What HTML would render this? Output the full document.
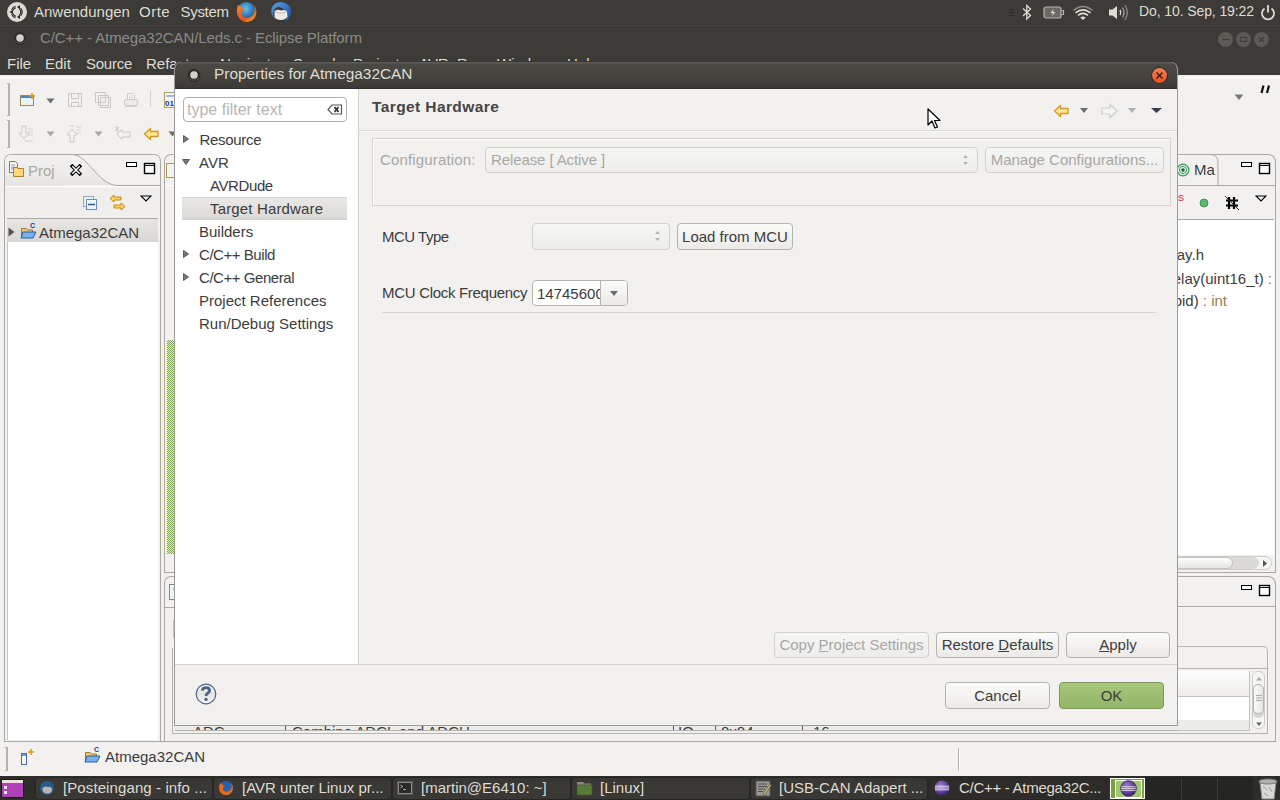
<!DOCTYPE html>
<html><head><meta charset="utf-8">
<style>
*{margin:0;padding:0;box-sizing:border-box}
html,body{width:1280px;height:800px;overflow:hidden}
body{position:relative;background:#f2f1f0;font-family:"Liberation Sans",sans-serif;font-size:15px;color:#3c3c3c}
.a{position:absolute}
.t{position:absolute;white-space:nowrap;line-height:17px;font-size:15px}
#top{left:0;top:0;width:1280px;height:25px;background:#3c3b37}
#ecl{left:0;top:25px;width:1280px;height:50px;background:#3c3b37;border-top:1px solid #45443f}
.mn{color:#dfdbd2}
#task{left:0;top:776px;width:1280px;height:24px;background:#2e2d2a}
.ti{position:absolute;top:1px;height:23px;border:1px solid #262624;border-radius:4px;background:#393834}
.tt{position:absolute;top:3px;color:#dfdbd2;font-size:15px;white-space:nowrap;line-height:17px}
#dlg{left:174px;top:62px;width:1004px;height:664px;background:#f2f1f0;border:1px solid #8a8a86;border-top:none;border-radius:6px 6px 0 0;overflow:hidden}
#dtitle{left:0;top:0;width:1004px;height:27px;background:linear-gradient(#4d4b46,#3c3b37)}
.panel{position:absolute;border:1px solid #aaa9a5;background:#f2f1f0}
.btn{position:absolute;border:1px solid #b5b3ad;border-radius:4px;background:linear-gradient(#fbfbfa,#eceae7);text-align:center;line-height:24px;color:#3c3c3c}
</style></head><body>

<!-- top panel -->
<div id="top" class="a">
  <svg class="a" style="left:6px;top:1px" width="22" height="22" viewBox="0 0 22 22"><circle cx="11" cy="11" r="10" fill="#dfdbd2"/><g fill="none" stroke="#2a2926" stroke-width="1.1"><path d="M5.6 9.2A6 6 0 0 1 9.5 5.3"/><path d="M5.6 12.8A6 6 0 0 0 9.5 16.7"/><path d="M14.6 7.2A6 6 0 0 1 14.6 14.8"/><path d="M6.8 9.6A4.5 4.5 0 0 1 9.8 6.7"/><path d="M6.8 12.4A4.5 4.5 0 0 0 9.8 15.3"/><path d="M13.6 8.1A4.5 4.5 0 0 1 13.6 13.9"/></g><path d="M3.3 11L7 9V13Z M14 4V8.5L11 6Z M14 18V13.5L11 16Z" fill="#2a2926"/></svg>
  <div class="t mn" style="left:34px;top:3px">Anwendungen</div>
  <div class="t mn" style="left:139px;top:3px;letter-spacing:0.5px">Orte</div>
  <div class="t mn" style="left:180.5px;top:3px;letter-spacing:-0.3px">System</div>
  <svg class="a" style="left:235px;top:1px" width="22" height="22" viewBox="0 0 22 22"><defs><radialGradient id="ffb" cx="0.45" cy="0.35" r="0.6"><stop offset="0" stop-color="#5fc4f0"/><stop offset="1" stop-color="#1a4f9a"/></radialGradient><linearGradient id="ffo" x1="0" y1="0" x2="1" y2="1"><stop offset="0" stop-color="#f08a20"/><stop offset="0.6" stop-color="#e8501a"/><stop offset="1" stop-color="#f6c020"/></linearGradient></defs><circle cx="11.5" cy="10.5" r="9.5" fill="url(#ffb)"/><path d="M3 4Q1 9 2.5 14Q5 20.5 11.5 21Q18.5 21 21 14Q22.5 8 19 3.5Q21 9 18 14Q14.5 18 10 16.5Q6 15 6.5 10.5L10 9Q7 8 7 6Q5.5 5 3 4Z" fill="url(#ffo)"/></svg>
  <svg class="a" style="left:270px;top:1px" width="22" height="22" viewBox="0 0 22 22"><defs><linearGradient id="tbb" x1="0" y1="0" x2="1" y2="1"><stop offset="0" stop-color="#5aa0e8"/><stop offset="1" stop-color="#1a4aa0"/></linearGradient></defs><path d="M11 1Q19 1.5 21 9Q21.5 17 15 21Q18 15 16 11Q14 7 9 6Q5.5 6 4 9Q2 13 4.5 18Q0.5 13 1.5 8Q3.5 1 11 1Z" fill="url(#tbb)"/><path d="M4.5 10Q8 8 11 9.5Q15 8 17 10.5L17.5 16Q15 19 11 19Q6 19 4.5 16Z" fill="#ecebe6"/><path d="M5 10.5Q11 14 17 10.5" fill="none" stroke="#b8b6b0" stroke-width="0.8"/></svg>
  <div class="t mn" style="left:1139px;top:3px;font-size:14px;letter-spacing:-0.1px">Do, 10. Sep, 19:22</div>
<svg class="a" style="left:1009px;top:8px" width="5" height="9"><path d="M0 1.5H5M0 4.5H5M0 7.5H5" stroke="#2a2a27" stroke-width="1"/></svg>
<svg class="a" style="left:1021px;top:3px" width="12" height="19" viewBox="0 0 12 19"><path d="M2 5.5L9.5 12.5L5.8 16V2.5L9.5 6L2 13" fill="none" stroke="#dfdbd2" stroke-width="1.3"/></svg>
<svg class="a" style="left:1043px;top:6px" width="22" height="13" viewBox="0 0 22 13"><rect x="1" y="1" width="17" height="11" rx="2" fill="#6a6964" stroke="#b5b3ad" stroke-width="1.2"/><path d="M18.5 4.5H20.5V8.5H18.5" fill="none" stroke="#b5b3ad" stroke-width="1.2"/><path d="M10.5 3L7.5 7H10L8.5 10.5L12.5 6H10Z" fill="#dfdbd2"/></svg>
<svg class="a" style="left:1072px;top:5px" width="22" height="16" viewBox="0 0 22 16"><path d="M1.5 5.5Q11 -2.5 20.5 5.5" fill="none" stroke="#8a8984" stroke-width="1.6"/><path d="M3.5 7.8Q11 2 18.5 7.8" fill="none" stroke="#dfdbd2" stroke-width="1.6"/><path d="M6 10.3Q11 6.5 16 10.3" fill="none" stroke="#dfdbd2" stroke-width="1.6"/><path d="M8.3 12.6Q11 10.5 13.7 12.6L11 15Z" fill="#dfdbd2"/></svg>
<svg class="a" style="left:1108px;top:3px" width="22" height="19" viewBox="0 0 22 19"><path d="M1 6.5H4.5L9 3V16L4.5 12.5H1Z" fill="#dfdbd2"/><path d="M12 7Q13.5 9.5 12 12" fill="none" stroke="#dfdbd2" stroke-width="1.5"/><path d="M14.5 4.5Q17.5 9.5 14.5 14.5" fill="none" stroke="#9a9994" stroke-width="1.4"/><path d="M17 2Q21.5 9.5 17 17" fill="none" stroke="#8a8984" stroke-width="1.4"/></svg>
<svg class="a" style="left:1260px;top:4px" width="16" height="17" viewBox="0 0 16 17"><path d="M4.5 4.5A6 6 0 1 0 11.5 4.5" fill="none" stroke="#dfdbd2" stroke-width="1.8"/><path d="M8 1V8.5" stroke="#dfdbd2" stroke-width="1.8"/></svg>
</div>

<!-- eclipse title + menu -->
<div id="ecl" class="a">
  <svg class="a" style="left:12px;top:4px" width="16" height="17" viewBox="0 0 16 17"><circle cx="8" cy="8.5" r="6.5" fill="#2c2b28"/><path d="M2.5 11Q8 15.5 13.5 11" fill="none" stroke="#55544f" stroke-width="1"/><circle cx="8" cy="8" r="3.8" fill="#d2d0cb"/></svg>
  <div class="t" style="left:40px;top:3px;color:#8b8a85;letter-spacing:-0.09px">C/C++ - Atmega32CAN/Leds.c - Eclipse Platform</div>
  <svg class="a" style="left:1216px;top:5px" width="56" height="17" viewBox="0 0 56 17"><circle cx="9.5" cy="8.5" r="7.5" fill="#5b5a55"/><circle cx="27.5" cy="8.5" r="7.5" fill="#5b5a55"/><circle cx="45.5" cy="8.5" r="7.5" fill="#5b5a55"/><path d="M6 8.5H13" stroke="#3e3d39" stroke-width="1.2"/><rect x="24.5" y="6.5" width="6" height="4" fill="none" stroke="#3e3d39" stroke-width="1.2"/><path d="M43 6L48 11M48 6L43 11" stroke="#3e3d39" stroke-width="1.2"/></svg>
  <div class="t mn" style="left:7px;top:29px">File</div>
  <div class="t mn" style="left:45px;top:29px">Edit</div>
  <div class="t mn" style="left:86px;top:29px;letter-spacing:-0.25px">Source</div>
  <div class="t mn" style="left:146px;top:29px">Refactor</div>
  <div class="t mn" style="left:220px;top:29px">Navigate</div>
  <div class="t mn" style="left:293px;top:29px">Search</div>
  <div class="t mn" style="left:353px;top:29px">Project</div>
  <div class="t mn" style="left:419px;top:29px">AVR</div>
  <div class="t mn" style="left:457px;top:29px">Run</div>
  <div class="t mn" style="left:497px;top:29px">Window</div>
  <div class="t mn" style="left:567px;top:29px">Help</div>
</div>

<!-- eclipse body panels -->
<div class="a" style="left:0;top:77px;width:1280px;height:1px;background:#fff"></div>
<!-- toolbar row1 -->
<div class="a" style="left:7px;top:83px;width:3px;height:33px;border:1px solid #b5b3ae;border-left:none;border-right-width:2px"></div>
<div class="a" style="left:7px;top:120px;width:3px;height:28px;border:1px solid #b5b3ae;border-left:none;border-right-width:2px"></div>
<svg class="a" style="left:19px;top:92px" width="18" height="16" viewBox="0 0 18 16"><rect x="1.5" y="3.5" width="13" height="10" fill="#eaf3fb" stroke="#a08a4a"/><rect x="2" y="4" width="12" height="2" fill="#4a84c4"/><path d="M13 1V7M10 4H16" stroke="#d89a10" stroke-width="1.6"/></svg>
<svg class="a" style="left:46px;top:98px" width="9" height="6"><path d="M0.5 0.5H8.5L4.5 5.5Z" fill="#6f6f6f"/></svg>
<svg class="a" style="left:67px;top:92px" width="16" height="16" viewBox="0 0 16 16"><path d="M1.5 1.5H14.5V14.5H1.5Z M4.5 1.5V6.5H11.5V1.5 M4.5 14.5V10.5H11.5V14.5" fill="none" stroke="#c9c8c5"/></svg>
<svg class="a" style="left:95px;top:92px" width="16" height="16" viewBox="0 0 16 16"><path d="M0.5 0.5H10.5V10.5H0.5Z M3.5 3.5H13.5V13.5H3.5Z M5.5 5.5H15.5V15.5H5.5Z" fill="#f2f1f0" stroke="#c9c8c5"/></svg>
<svg class="a" style="left:123px;top:92px" width="16" height="16" viewBox="0 0 16 16"><path d="M4.5 1.5H10L11.5 3V7.5H4.5Z" fill="#f6f6f5" stroke="#cfcdc9"/><path d="M6 4H10M6 5.5H10" stroke="#d6d4d0" stroke-width="0.8"/><rect x="1.5" y="7.5" width="13" height="6" rx="2" fill="#ecebe8" stroke="#c9c8c5"/><path d="M2 14.5H14" stroke="#d6d4d0"/></svg>
<div class="a" style="left:150px;top:91px;width:1px;height:16px;background:#d3d1cc"></div>
<svg class="a" style="left:164px;top:92px" width="12" height="16" viewBox="0 0 12 16"><rect x="0.5" y="0.5" width="11" height="15" fill="#f4f8fc" stroke="#b09a5a"/><path d="M2 4H10" stroke="#4a7ac0"/><text x="1" y="14" font-size="8" font-weight="bold" fill="#1a3a7a" font-family="Liberation Sans">01</text></svg>
<!-- toolbar row2 -->
<svg class="a" style="left:18px;top:125px" width="16" height="18" viewBox="0 0 16 18"><path d="M4 1H8V8H11L6 14L1 8H4Z" fill="#f2f1f0" stroke="#cbc9c5"/><path d="M10 4H15M10 7H15M10 10H15M6 16H15" stroke="#d3d1cc"/></svg>
<svg class="a" style="left:46px;top:131px" width="9" height="6"><path d="M0.5 0.5H8.5L4.5 5.5Z" fill="#a9a8a6"/></svg>
<svg class="a" style="left:66px;top:125px" width="16" height="18" viewBox="0 0 16 18"><path d="M4 17H8V10H11L6 4L1 10H4Z" fill="#f2f1f0" stroke="#cbc9c5"/><path d="M10 2H15M10 5H15M10 8H15M3 1H8" stroke="#d3d1cc"/></svg>
<svg class="a" style="left:94px;top:131px" width="9" height="6"><path d="M0.5 0.5H8.5L4.5 5.5Z" fill="#a9a8a6"/></svg>
<svg class="a" style="left:114px;top:126px" width="18" height="16" viewBox="0 0 18 16"><path d="M3 8L8 3.5V6H16V11H8V13.5Z" fill="#f2f1f0" stroke="#c9c8c5"/><path d="M1 1L5 5M5 1L1 5M3 0V6" stroke="#c9c8c5"/></svg>
<svg class="a" style="left:143px;top:126px" width="17" height="16" viewBox="0 0 17 16"><path d="M1.5 8L7.5 2.5V5.5H15V10.5H7.5V13.5Z" fill="#fde7a0" stroke="#d09a20" stroke-width="1.3" stroke-linejoin="round"/></svg>
<svg class="a" style="left:168px;top:131px" width="9" height="6"><path d="M0.5 0.5H8.5L4.5 5.5Z" fill="#6f6f6f"/></svg>
<!-- right toolbar -->
<svg class="a" style="left:1234px;top:94px" width="10" height="7"><path d="M0.5 0.5H9.5L5 6Z" fill="#7a7a7a"/></svg>
<svg class="a" style="left:1260px;top:85px" width="12" height="9" viewBox="0 0 12 9"><path d="M3.5 0.5L1.5 8M9 0.5L7 8" stroke="#111" stroke-width="2.2"/></svg>

<!-- left panel: project explorer -->
<svg class="a" style="left:3px;top:153px" width="159" height="590" viewBox="0 0 159 590">
  <defs><linearGradient id="tg" x1="0" y1="0" x2="0" y2="1"><stop offset="0" stop-color="#f4f3f2"/><stop offset="1" stop-color="#e6e5e2"/></linearGradient></defs>
  <path d="M1.5 588.5V8.5Q1.5 1.5 8.5 1.5H150.5Q157.5 1.5 157.5 8.5V588.5" fill="#f2f1f0" stroke="#aaa9a5"/>
  <path d="M2 33V8.5Q2 2 8.5 2H69C85 2 95 32 115 32Z" fill="url(#tg)"/>
  <path d="M69 1.5C85 1.5 95 32.5 115 32.5H157.5" fill="none" stroke="#aaa9a5"/>
</svg>
<div class="a" style="left:5px;top:186px;width:155px;height:33px;background:#f0efed;border-top:1px solid #fff"></div>
<div class="a" style="left:7px;top:218px;width:151px;height:1px;background:#aaa9a5"></div>
<div class="a" style="left:7px;top:219px;width:151px;height:521px;background:#fff;border-left:1px solid #c8c6c2"></div>
<div class="a" style="left:7px;top:219px;width:151px;height:23px;background:linear-gradient(#e7e6e4,#d9d7d3)"></div>
<svg class="a" style="left:9px;top:161px" width="16" height="17" viewBox="0 0 16 17"><path d="M0.5 0.5H6.5L8.5 2.5V11.5H0.5Z" fill="#f4f6fa" stroke="#8a7a4a"/><path d="M2 4H6M2 6H6M2 8H5" stroke="#6a8ac0" stroke-width="0.8"/><path d="M4.5 6.5H8L9 7.5H14.5V15.5H4.5Z" fill="#fbd878" stroke="#c07a20"/></svg>
<div class="t" style="left:28px;top:162px;color:#a9a7a3">Proj</div>
<svg class="a" style="left:70px;top:164px" width="12" height="12" viewBox="0 0 12 12"><path d="M2.3 2.3L9.7 9.7M9.7 2.3L2.3 9.7" stroke="#000" stroke-width="3.6" stroke-linecap="square"/><path d="M2.3 2.3L9.7 9.7M9.7 2.3L2.3 9.7" stroke="#fff" stroke-width="1.5"/></svg>
<div class="a" style="left:126px;top:162px;width:11px;height:5px;border:1.5px solid #000;background:#fff"></div>
<svg class="a" style="left:143px;top:162px" width="13" height="13" viewBox="0 0 13 13"><rect x="1.5" y="1.5" width="10" height="10" fill="#fff" stroke="#000" stroke-width="1.4"/><path d="M2 3.5H11" stroke="#111" stroke-width="1"/></svg>
<svg class="a" style="left:83px;top:196px" width="14" height="14" viewBox="0 0 14 14"><rect x="0.5" y="0.5" width="10" height="10" fill="#eef4fb" stroke="#8aa6c8"/><rect x="3.5" y="3.5" width="10" height="10" fill="#eef4fb" stroke="#6d8db5"/><path d="M5 8.5H12" stroke="#2a5a9a" stroke-width="1.5"/></svg>
<svg class="a" style="left:109px;top:194px" width="17" height="17" viewBox="0 0 17 17"><path d="M1 4.5L5 1V3H12V6H5V8Z" fill="#fbd36a" stroke="#c78a12"/><path d="M16 12.5L12 9V11H5V14H12V16Z" fill="#fbd36a" stroke="#c78a12"/></svg>
<svg class="a" style="left:140px;top:195px" width="12" height="7"><path d="M1 1H11L6 6Z" fill="#fff" stroke="#000" stroke-width="1.2"/></svg>
<svg class="a" style="left:8px;top:227px" width="7" height="10"><path d="M0.5 0.5L6.5 5L0.5 9.5Z" fill="#555"/></svg>
<svg class="a" style="left:20px;top:222px" width="17" height="18" viewBox="0 0 17 18"><path d="M1.5 6.5H6L7.5 8H12.5V15.5H1.5Z" fill="#f6c860" stroke="#9a7a30"/><path d="M3 10H16L13 16H1Z" fill="#7ab0e8" stroke="#2a5aa8"/><text x="10" y="6" font-size="7" font-weight="bold" fill="#1a3a8a" font-family="Liberation Sans">C</text></svg>
<div class="t" style="left:39px;top:224px;color:#3c3c3c">Atmega32CAN</div>

<!-- editor panel slice -->
<div class="a" style="left:164px;top:154px;width:14px;height:419px;border:1px solid #aaa9a5;border-right:none;border-radius:7px 0 0 0;background:#f2f1f0"></div>
<svg class="a" style="left:166px;top:163px" width="10" height="15"><rect x="0.5" y="0.5" width="12" height="14" fill="#eef4fb" stroke="#b09a5a"/></svg>
<div class="a" style="left:165px;top:185px;width:13px;height:1px;background:#fff"></div>
<div class="a" style="left:167px;top:200px;width:10px;height:355px;background:#f2f1f0"></div>
<div class="a" style="left:167px;top:340px;width:8px;height:214px;background:repeating-conic-gradient(#76a544 0 25%,#e6efd9 0 50%) 0 0/2px 2px"></div>
<div class="a" style="left:164px;top:576px;width:14px;height:166px;border:1px solid #aaa9a5;border-right:none;border-radius:7px 0 0 0;background:#f2f1f0"></div>
<svg class="a" style="left:169px;top:584px" width="9" height="16"><rect x="0.5" y="0.5" width="12" height="15" fill="#eef4fb" stroke="#8a8a6a"/><circle cx="7" cy="5" r="2.5" fill="#e02020"/><circle cx="7" cy="11" r="2" fill="#f0a020"/></svg>
<div class="a" style="left:165px;top:607px;width:13px;height:1px;background:#aaa9a5"></div>

<!-- right upper panel -->
<div class="a" style="left:1170px;top:154px;width:106px;height:419px;border:1px solid #aaa9a5;border-left:none;border-radius:0 8px 0 0;background:#f2f1f0"></div>
<svg class="a" style="left:1170px;top:154px" width="52" height="32" viewBox="0 0 52 32"><path d="M0 0.5H40Q48 0.5 48 8.5V31.5" fill="none" stroke="#aaa9a5"/><path d="M0 31.5H106" stroke="#aaa9a5"/></svg>
<div class="a" style="left:1170px;top:185px;width:105px;height:1px;background:#aaa9a5"></div>
<svg class="a" style="left:1176px;top:163px" width="14" height="14"><circle cx="7" cy="7" r="5.8" fill="none" stroke="#2a9a5a" stroke-width="1.2"/><circle cx="7" cy="7" r="3.6" fill="none" stroke="#2a9a5a" stroke-width="1"/><circle cx="7" cy="7" r="1.8" fill="#1a6a2a"/></svg>
<div class="t" style="left:1194px;top:161px;color:#3c3c3c">Ma</div>
<div class="a" style="left:1241px;top:162px;width:11px;height:5px;border:1.5px solid #000;background:#fff"></div>
<svg class="a" style="left:1258px;top:162px" width="13" height="13" viewBox="0 0 13 13"><rect x="1.5" y="1.5" width="10" height="10" fill="#fff" stroke="#000" stroke-width="1.4"/><path d="M2 3.5H11" stroke="#111" stroke-width="1"/></svg>
<div class="t" style="left:1178px;top:190px;font-size:9px;color:#d0103a">S</div>
<svg class="a" style="left:1199px;top:198px" width="10" height="10"><circle cx="5" cy="5" r="4" fill="#5cb86a" stroke="#2a8a4a" stroke-width="0.8"/></svg>
<svg class="a" style="left:1224px;top:195px" width="16" height="16" viewBox="0 0 16 16"><path d="M5 2V14M10 2V14M2 5.5H14M2 10.5H14" stroke="#000" stroke-width="2.2"/><path d="M1 1L15 15" stroke="#222" stroke-width="0.9"/></svg>
<svg class="a" style="left:1255px;top:195px" width="12" height="7"><path d="M1 1H11L6 6Z" fill="#fff" stroke="#000" stroke-width="1.2"/></svg>
<div class="a" style="left:1170px;top:219px;width:104px;height:1px;background:#aaa9a5"></div>
<div class="a" style="left:1170px;top:220px;width:104px;height:335px;background:#fff"></div>
<div class="t" style="right:76px;top:246px;color:#3c3c3c">delay.h</div>
<div class="t" style="right:8px;top:270px;color:#3c3c3c">_delay(uint16_t) <span style="color:#9a8050">:</span></div>
<div class="t" style="right:53px;top:292px;color:#3c3c3c">void) <span style="color:#9a8050">: int</span></div>
<div class="a" style="left:1170px;top:555px;width:104px;height:17px;background:#f2f1f0"></div>
<div class="a" style="left:1160px;top:556px;width:112px;height:14px;border:1px solid #cfcdc9;border-radius:7px;background:#f6f6f5"></div>
<div class="a" style="left:1225px;top:557px;width:34px;height:12px;background:#dcdad6;border-radius:0 6px 6px 0"></div>
<div class="a" style="left:1160px;top:557px;width:73px;height:12px;border:1px solid #c5c3be;border-radius:6px;background:linear-gradient(#fdfdfd,#e6e5e2)"></div>
<svg class="a" style="left:1262px;top:559px" width="6" height="9"><path d="M1 1L5 4.5L1 8Z" fill="#555"/></svg>

<!-- right lower panel -->
<div class="a" style="left:1170px;top:576px;width:106px;height:166px;border:1px solid #aaa9a5;border-left:none;border-radius:0 8px 0 0;background:#f2f1f0"></div>
<div class="a" style="left:1241px;top:585px;width:11px;height:5px;border:1.5px solid #000;background:#fff"></div>
<svg class="a" style="left:1258px;top:584px" width="13" height="13" viewBox="0 0 13 13"><rect x="1.5" y="1.5" width="10" height="10" fill="#fff" stroke="#000" stroke-width="1.4"/><path d="M2 3.5H11" stroke="#111" stroke-width="1"/></svg>
<div class="a" style="left:1170px;top:606px;width:105px;height:1px;background:#aaa9a5"></div>
<div class="a" style="left:1170px;top:646px;width:98px;height:88px;border:1px solid #b5b3ae;border-left:none;border-radius:0 5px 0 0;background:#f2f1f0"></div>
<div class="a" style="left:1170px;top:668px;width:97px;height:1px;background:#b5b3ae"></div>
<div class="a" style="left:1170px;top:671px;width:80px;height:60px;border:1px solid #c5c3be;border-left:none;border-top:none"></div>
<div class="a" style="left:1170px;top:671px;width:79px;height:26px;background:linear-gradient(#fdfdfd,#eeedeb);border-bottom:1px solid #c5c3be"></div>
<div class="a" style="left:1170px;top:697px;width:79px;height:23px;background:#fff"></div>
<div class="a" style="left:1170px;top:720px;width:79px;height:10px;background:#ebebea"></div>
<div class="a" style="left:1252px;top:671px;width:13px;height:58px;border:1px solid #cfcdc9;border-radius:6px;background:#f6f6f5"></div>
<div class="a" style="left:1253px;top:686px;width:11px;height:32px;border-radius:5px;background:#d8d6d2"></div>
<div class="a" style="left:1253px;top:684px;width:11px;height:30px;border:1px solid #b5b3ae;border-radius:5px;background:linear-gradient(90deg,#fbfbfa,#e6e5e2)"></div>
<svg class="a" style="left:1255px;top:676px" width="8" height="5"><path d="M1 4.5L4 1L7 4.5Z" fill="#aaa"/></svg>
<svg class="a" style="left:1255px;top:722px" width="8" height="5"><path d="M1 0.5L4 4L7 0.5Z" fill="#666"/></svg>
<svg class="a" style="left:1256px;top:694px" width="6" height="8"><path d="M0 1.5H6M0 4H6M0 6.5H6" stroke="#999" stroke-width="0.8"/></svg>

<!-- status bar -->
<div class="a" style="left:4px;top:741px;width:1272px;height:1px;background:#aaa9a5"></div>
<div class="a" style="left:5px;top:747px;width:3px;height:24px;border:1px solid #b5b3ae;border-left:none;border-right-width:2px"></div>
<svg class="a" style="left:20px;top:748px" width="16" height="18" viewBox="0 0 16 18"><rect x="1.5" y="5.5" width="5" height="11" fill="#f4f8fc" stroke="#4a6a9a"/><path d="M2 7H6" stroke="#4a84c4" stroke-width="1.5"/><path d="M11 1V7M8 4H14" stroke="#d89a10" stroke-width="1.5"/></svg>
<svg class="a" style="left:84px;top:746px" width="17" height="18" viewBox="0 0 17 18"><path d="M1.5 6.5H6L7.5 8H12.5V15.5H1.5Z" fill="#f6c860" stroke="#9a7a30"/><path d="M3 10H16L13 16H1Z" fill="#7ab0e8" stroke="#2a5aa8"/><text x="10" y="6" font-size="7" font-weight="bold" fill="#1a3a8a" font-family="Liberation Sans">C</text></svg>
<div class="t" style="left:105px;top:748px;color:#3c3c3c">Atmega32CAN</div>
<div class="a" style="left:958px;top:748px;width:2px;height:23px;border-left:1px solid #b5b3ae;border-right:1px solid #fff"></div>
<!-- visible table strip under dialog -->
<div class="a" style="left:172px;top:648px;width:1006px;height:86px;border:1px solid #b5b3ae;border-top:none;border-right:none;background:#f2f1f0"></div>
<div class="a" style="left:173px;top:619px;width:4px;height:20px;border:1px solid #c5c3be;border-radius:2px"></div>
<div class="a" style="left:175px;top:664px;width:1003px;height:67px;background:#fff;border-bottom:1px solid #b5b3ae;border-left:1px solid #b5b3ae"></div>
<div class="a" style="left:175px;top:720px;width:1003px;height:10px;background:#ebebea;overflow:hidden">
  <div class="t" style="left:18px;top:3px;color:#3c3c3c">ADC</div>
  <div class="t" style="left:117px;top:3px;color:#3c3c3c">Combine ADCL and ADCH</div>
  <div class="t" style="left:503px;top:3px;color:#3c3c3c">IO</div>
  <div class="t" style="left:546px;top:3px;color:#3c3c3c">0x04</div>
  <div class="t" style="left:638px;top:3px;color:#3c3c3c">16</div>
  <div class="a" style="left:110px;top:6px;width:1px;height:4px;background:#555"></div>
  <div class="a" style="left:498px;top:6px;width:1px;height:4px;background:#555"></div>
  <div class="a" style="left:540px;top:6px;width:1px;height:4px;background:#555"></div>
  <div class="a" style="left:627px;top:6px;width:1px;height:4px;background:#555"></div>
</div>

<!-- taskbar -->
<div id="task" class="a">
  <svg class="a" style="left:0;top:2px" width="25" height="21" viewBox="0 0 25 21"><rect x="1" y="1" width="23" height="19" rx="2" fill="#1a1a18"/><rect x="2" y="5" width="21" height="14" fill="#b040b8"/><rect x="2" y="2" width="21" height="3" fill="#e8e6d8"/><rect x="4" y="8" width="3" height="3" fill="#eee"/><rect x="4" y="13" width="3" height="3" fill="#eee"/></svg>
  <svg class="a" style="left:27px;top:8px" width="5" height="9"><path d="M0 1.5H5M0 4.5H5M0 7.5H5" stroke="#2a2a27" stroke-width="1"/></svg>
  <div class="ti" style="left:35px;width:178px"></div>
  <svg class="a" style="left:39px;top:4px" width="16" height="16" viewBox="0 0 16 16"><circle cx="8" cy="8" r="7" fill="#2a5a90"/><path d="M3.5 8Q6 5.5 9 7Q12 6 13 9L12.5 12Q10 14 7 13.5Q4 13 3.5 10Z" fill="#b8b6b2"/></svg>
  <div class="tt" style="left:63px;letter-spacing:0.1px">[Posteingang - info ...</div>
  <div class="ti" style="left:213px;width:179px"></div>
  <svg class="a" style="left:218px;top:4px" width="16" height="16" viewBox="0 0 16 16"><circle cx="8" cy="8" r="7" fill="#2a60a8"/><path d="M2 3Q0.5 7 1.5 10.5Q3.5 15 8 15Q13 15 14.8 10Q15.5 6 13 2.5Q14.5 7 12.5 10Q10 12.5 7 11.5Q4.5 10.5 5 7.5L7 6.5Q5 6 4.5 4.5Z" fill="#e86a1a"/></svg>
  <div class="tt" style="left:242px">[AVR unter Linux pr...</div>
  <div class="ti" style="left:392px;width:179px"></div>
  <svg class="a" style="left:397px;top:5px" width="16" height="14" viewBox="0 0 16 14"><rect x="0.5" y="0.5" width="15" height="13" fill="#8a8984" stroke="#55544f"/><rect x="2" y="2" width="12" height="10" fill="#2a2a28"/><path d="M3.5 4L5.5 5.5L3.5 7M6 8.5H9" stroke="#ccc" stroke-width="0.8" fill="none"/></svg>
  <div class="tt" style="left:421px">[martin@E6410: ~]</div>
  <div class="ti" style="left:571px;width:179px"></div>
  <svg class="a" style="left:576px;top:4px" width="17" height="16" viewBox="0 0 17 16"><path d="M1 2H7L8.5 3.5H15V5H1Z" fill="#8a8a80"/><rect x="1" y="5" width="15" height="10" fill="#5a7a3a" stroke="#44552e" stroke-width="0.8"/></svg>
  <div class="tt" style="left:600px">[Linux]</div>
  <div class="ti" style="left:750px;width:178px"></div>
  <svg class="a" style="left:755px;top:4px" width="17" height="17" viewBox="0 0 17 17"><rect x="1" y="1" width="14" height="15" fill="#9a9994" stroke="#55544f"/><path d="M3 4H12M3 6.5H12M3 9H10M3 11.5H8" stroke="#3a3a38" stroke-width="0.8"/><path d="M8 14L15 4L16.5 5L9.5 15Z" fill="#e0d070" stroke="#333" stroke-width="0.6"/></svg>
  <div class="tt" style="left:779px">[USB-CAN Adapert ...</div>
  <div class="ti" style="left:928px;width:179px;background:#2d2c29"></div>
  <svg class="a" style="left:934px;top:4px" width="16" height="16" viewBox="0 0 16 16"><defs><radialGradient id="ecg" cx="0.4" cy="0.35" r="0.7"><stop offset="0" stop-color="#a080d0"/><stop offset="1" stop-color="#3a1a70"/></radialGradient></defs><circle cx="8" cy="8" r="7.5" fill="url(#ecg)"/><path d="M1 6.2H15M0.8 8H15.2M1 9.8H15" stroke="#f0ecf8" stroke-width="0.9"/></svg>
  <div class="tt" style="left:959px;letter-spacing:-0.28px">C/C++ - Atmega32C...</div>
  <div class="a" style="left:1145px;top:1px;width:108px;height:23px;background:#252523"></div>
  <div class="a" style="left:1181px;top:2px;width:1px;height:21px;background:#3c3b37"></div>
  <div class="a" style="left:1217px;top:2px;width:1px;height:21px;background:#3c3b37"></div>
  <div class="a" style="left:1110px;top:2px;width:35px;height:21px;background:#7aa040;border:1px solid #fff"></div>
  <div class="a" style="left:1115px;top:4px;width:27px;height:18px;background:#a0c870;border:1px solid #fff"></div>
  <svg class="a" style="left:1120px;top:4px" width="17" height="17" viewBox="0 0 17 17"><circle cx="8.5" cy="8.5" r="7.8" fill="url(#ecg)" stroke="#3a0a6a" stroke-width="0.8"/><path d="M1.2 6.8H15.8M1 8.6H16M1.3 10.4H15.7" stroke="#e8e0f4" stroke-width="0.9"/></svg>
  <svg class="a" style="left:1257px;top:1px" width="22" height="23" viewBox="0 0 22 23"><path d="M3 5L5 22H17L19 5Z" fill="#d8d8d6" stroke="#8a8a88"/><ellipse cx="11" cy="4.5" rx="9" ry="2.5" fill="#b0b0ae" stroke="#777"/><path d="M6 9L10 13M12 10L15 15M7 16L11 19" stroke="#9a9a98"/></svg>
</div>

<!-- dialog -->
<div class="a" style="left:174px;top:62px;width:1004px;height:664px;background:#f2f1f0;border:1px solid #9d9b96;border-top:none;border-radius:7px 7px 0 0;overflow:hidden;box-shadow:0 -1px 0 #34332f">
  <div class="a" style="left:-1px;top:0;width:1004px;height:27px;background:linear-gradient(#5d5c57 0,#5d5c57 1px,#4a4944 2px,#45443f 50%,#3c3b37 94%,#2b2a27 100%)"></div>
</div>
<svg class="a" style="left:186px;top:67px" width="16" height="17" viewBox="0 0 16 17"><circle cx="8" cy="8.5" r="6.5" fill="#2c2b28"/><path d="M2.5 11Q8 15.5 13.5 11" fill="none" stroke="#55544f" stroke-width="1"/><circle cx="8" cy="8" r="3.8" fill="#d2d0cb"/></svg>
<div class="t" style="left:214px;top:65px;color:#dfdbd2;font-size:15.4px">Properties for Atmega32CAN</div>
<div class="a" style="left:1151px;top:67px;width:17px;height:17px;border-radius:50%;background:#2d2c29"></div>
<div class="a" style="left:1152px;top:68px;width:15px;height:15px;border-radius:50%;background:linear-gradient(#f27d5a,#e65424)"></div>
<svg class="a" style="left:1155px;top:71px" width="9" height="9" viewBox="0 0 9 9"><path d="M1.5 1.5L7.5 7.5M7.5 1.5L1.5 7.5" stroke="#3a1a10" stroke-width="1.4"/></svg>

<!-- sidebar -->
<div class="a" style="left:175px;top:89px;width:183px;height:575px;background:#fff"></div>
<div class="a" style="left:358px;top:89px;width:1px;height:575px;background:#d3d1cc"></div>
<div class="a" style="left:175px;top:664px;width:1002px;height:1px;background:#d3d1cc"></div>
<div class="a" style="left:183px;top:97px;width:164px;height:25px;border:1px solid #b0aea9;border-radius:4px;background:#fff"></div>
<div class="t" style="left:187px;top:101px;color:#b8b6b1;font-size:16px">type filter text</div>
<svg class="a" style="left:327px;top:103px" width="16" height="13" viewBox="0 0 16 13"><path d="M5 2H14.5V11H5L1 6.5Z" fill="none" stroke="#555" stroke-width="1.2"/><path d="M7.5 4L11.5 9M11.5 4L7.5 9" stroke="#333" stroke-width="1.8"/></svg>
<div class="a" style="left:182px;top:197px;width:165px;height:23px;background:linear-gradient(#d5d3cf,#e9e8e5 8%,#dddbd7 90%,#cfcdc9)"></div>
<svg class="a" style="left:182px;top:134px" width="8" height="10"><path d="M1.5 1.5L6.5 5L1.5 8.5Z" fill="#7a7a7a" stroke="#555" stroke-width="0.9" stroke-linejoin="round"/></svg>
<svg class="a" style="left:181px;top:158px" width="10" height="8"><path d="M1.5 1.5H8.5L5 6.5Z" fill="#7a7a7a" stroke="#555" stroke-width="0.9" stroke-linejoin="round"/></svg>
<svg class="a" style="left:182px;top:249px" width="8" height="10"><path d="M1.5 1.5L6.5 5L1.5 8.5Z" fill="#7a7a7a" stroke="#555" stroke-width="0.9" stroke-linejoin="round"/></svg>
<svg class="a" style="left:182px;top:272px" width="8" height="10"><path d="M1.5 1.5L6.5 5L1.5 8.5Z" fill="#7a7a7a" stroke="#555" stroke-width="0.9" stroke-linejoin="round"/></svg>
<div class="t" style="left:199.5px;top:131px;letter-spacing:-0.3px">Resource</div>
<div class="t" style="left:199px;top:154px">AVR</div>
<div class="t" style="left:210px;top:177px;letter-spacing:-0.4px">AVRDude</div>
<div class="t" style="left:210px;top:200px;letter-spacing:0.15px">Target Hardware</div>
<div class="t" style="left:199px;top:223px">Builders</div>
<div class="t" style="left:199px;top:246px;letter-spacing:-0.45px">C/C++ Build</div>
<div class="t" style="left:199px;top:269px;letter-spacing:-0.45px">C/C++ General</div>
<div class="t" style="left:199px;top:292px">Project References</div>
<div class="t" style="left:199px;top:315px">Run/Debug Settings</div>

<!-- content -->
<div class="t" style="left:372px;top:98px;font-weight:bold;font-size:15.5px;letter-spacing:0.4px;color:#454545">Target Hardware</div>
<svg class="a" style="left:1053px;top:103px" width="17" height="16" viewBox="0 0 17 16"><path d="M1.5 8L7.5 2.5V5.5H15V10.5H7.5V13.5Z" fill="#fde7a0" stroke="#d09a20" stroke-width="1.3" stroke-linejoin="round"/></svg>
<svg class="a" style="left:1079px;top:107px" width="10" height="7"><path d="M1 1H9L5 6Z" fill="#6b6b6b"/></svg>
<svg class="a" style="left:1100px;top:103px" width="18" height="16" viewBox="0 0 18 16"><path d="M17 8L10 1.5V5H2V11H10V14.5Z" fill="#f5f5f4" stroke="#cfcfcc" stroke-width="1.2"/></svg>
<svg class="a" style="left:1127px;top:107px" width="10" height="7"><path d="M1 1H9L5 6Z" fill="#b0b0b0"/></svg>
<svg class="a" style="left:1150px;top:107px" width="13" height="7"><path d="M1 1H12L6.5 6Z" fill="#3a3a5a"/></svg>
<div class="a" style="left:359px;top:130px;width:818px;height:1px;background:#d8d6d1"></div>
<div class="a" style="left:359px;top:131px;width:818px;height:1px;background:#fbfbfa"></div>

<div class="a" style="left:372px;top:138px;width:799px;height:68px;border:1px solid #d5d3ce;box-shadow:inset 1px 1px 0 #fff"></div>
<div class="t" style="left:380px;top:151px;color:#a9a7a3;letter-spacing:0.15px">Configuration:</div>
<div class="a" style="left:485px;top:147px;width:493px;height:26px;border:1px solid #d3d1cc;border-radius:4px;background:linear-gradient(#f6f6f5,#eeedeb)"></div>
<div class="t" style="left:491px;top:151px;color:#a9a7a3;letter-spacing:-0.1px">Release [ Active ]</div>
<svg class="a" style="left:962px;top:153px" width="7" height="14"><path d="M1 5L3.5 2L6 5ZM1 9L3.5 12L6 9Z" fill="#b5b5b3"/></svg>
<div class="btn" style="left:985px;top:147px;width:179px;height:26px;border-color:#d3d1cc;background:linear-gradient(#f6f6f5,#eeedeb);color:#a9a7a3">Manage Configurations...</div>

<div class="t" style="left:382px;top:228px;letter-spacing:-0.5px">MCU Type</div>
<div class="a" style="left:532px;top:223px;width:138px;height:27px;border:1px solid #d3d1cc;border-radius:4px;background:linear-gradient(#f6f6f5,#eeedeb)"></div>
<svg class="a" style="left:654px;top:229px" width="7" height="14"><path d="M1 5L3.5 2L6 5ZM1 9L3.5 12L6 9Z" fill="#b5b5b3"/></svg>
<div class="btn" style="left:677px;top:223px;width:116px;height:27px;line-height:26px">Load from MCU</div>

<div class="t" style="left:382px;top:284px;letter-spacing:-0.3px">MCU Clock Frequency</div>
<div class="a" style="left:532px;top:280px;width:96px;height:26px;border:1px solid #b5b3ad;border-radius:4px;background:#fff;overflow:hidden">
  <div class="t" style="left:4px;top:4px">14745600</div>
  <div class="a" style="left:67px;top:0;width:28px;height:24px;border-left:1px solid #b5b3ad;background:linear-gradient(#fbfbfa,#eceae7)"></div>
</div>
<svg class="a" style="left:609px;top:290px" width="10" height="7"><path d="M1 1H9L5 6Z" fill="#6b6b6b"/></svg>
<div class="a" style="left:382px;top:312px;width:774px;height:1px;background:#d8d6d1"></div>

<div class="btn" style="left:774px;top:632px;width:155px;height:26px;border-color:#d3d1cc;background:linear-gradient(#f6f6f5,#eeedeb);color:#a9a7a3">Copy <u>P</u>roject Settings</div>
<div class="btn" style="left:936px;top:632px;width:123px;height:26px">Restore <u>D</u>efaults</div>
<div class="btn" style="left:1066px;top:632px;width:104px;height:26px"><u>A</u>pply</div>

<svg class="a" style="left:195px;top:683px" width="22" height="22" viewBox="0 0 22 22"><defs><linearGradient id="hg" x1="0" y1="0" x2="0" y2="1"><stop offset="0" stop-color="#fafafa"/><stop offset="0.5" stop-color="#e4e4e4"/><stop offset="1" stop-color="#f6f6f6"/></linearGradient></defs><circle cx="11" cy="11" r="9.8" fill="url(#hg)" stroke="#4f6285" stroke-width="1.2"/><path d="M7.3 7.6Q7.6 4.6 11.1 4.6Q14.6 4.6 14.6 7.5Q14.6 9.3 12.6 10.3Q11.2 11 11 13" fill="none" stroke="#4f6285" stroke-width="2.8"/><circle cx="11" cy="16.4" r="1.7" fill="#4f6285"/></svg>
<div class="btn" style="left:945px;top:682px;width:105px;height:27px;line-height:26px">Cancel</div>
<div class="btn" style="left:1059px;top:682px;width:105px;height:27px;line-height:26px;border-color:#7d9a55;background:linear-gradient(#a8c77c,#92b566)">OK</div>

<!-- cursor -->
<svg class="a" style="left:927px;top:108px" width="14" height="22" viewBox="0 0 14 22"><path d="M1 1V17L5 13L8 20L10.5 19L7.5 12.5H13Z" fill="#fff" stroke="#000" stroke-width="1.2" stroke-linejoin="round"/></svg>
</body></html>
